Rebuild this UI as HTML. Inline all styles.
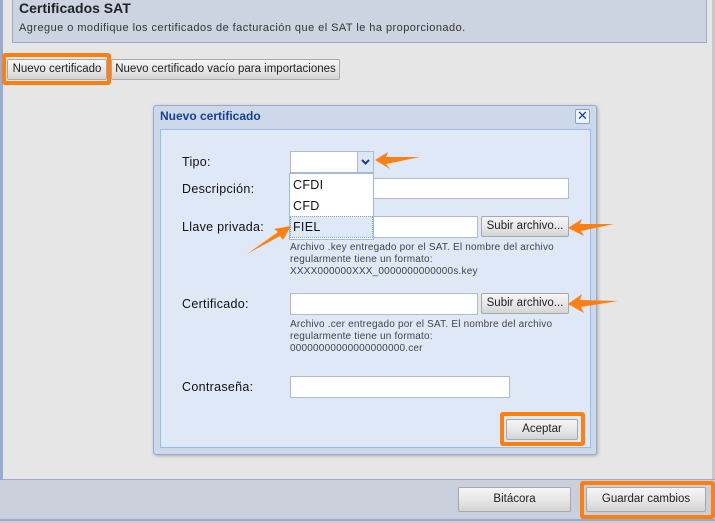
<!DOCTYPE html>
<html><head><meta charset="utf-8"><style>
*{box-sizing:border-box;margin:0;padding:0}
body{width:715px;height:523px;overflow:hidden;background:#e6e6e6;font-family:"Liberation Sans",sans-serif;font-size:12px;color:#222;position:relative;white-space:nowrap}
.a{position:absolute}
.btn{position:absolute;border:1px solid #a8a8a8;border-radius:2px;background:linear-gradient(#f6f6f6,#e4e4e4 60%,#d4d4d4);font-size:11.5px;text-align:center;color:#222;overflow:hidden}
.inp{position:absolute;background:#fff;border:1px solid #b5b8c8}
.lbl{position:absolute;font-size:12.5px;color:#111;letter-spacing:0.3px}
.hint{position:absolute;font-size:10px;color:#444;line-height:12px;letter-spacing:0.2px}
.or{position:absolute;border:4px solid #ff7f10;border-radius:3px}
</style></head><body>
<div class="a" style="left:0;top:0;width:3px;height:523px;background:#99acd0"></div>
<div class="a" style="left:712px;top:0;width:3px;height:480px;background:#c8c8c8"></div>
<div class="a" style="left:12px;top:0;width:695px;height:43px;background:#ccd4e2;border:1px solid #99acd0;border-top:none"></div>
<div class="a" style="left:19px;top:0px;font-weight:bold;font-size:14px;color:#222">Certificados SAT</div>
<div class="a" style="left:19px;top:22px;font-size:11px;color:#333;letter-spacing:0.45px">Agregue o modifique los certificados de facturación que el SAT le ha proporcionado.</div>

<div class="btn" style="left:7px;top:59px;width:100px;height:21px;line-height:19px">Nuevo certificado</div>
<div class="btn" style="left:111px;top:59px;width:229px;height:21px;line-height:19px">Nuevo certificado vacío para importaciones</div>
<div class="or" style="left:2px;top:53px;width:109px;height:32px"></div>

<div class="a" style="left:153px;top:105px;width:444px;height:350px;background:#cdd8ea;border:1px solid #99acd0;border-radius:3px;box-shadow:1px 1px 3px #aaa"></div>
<div class="a" style="left:160px;top:109px;font-weight:bold;color:#15428b;font-size:12px">Nuevo certificado</div>
<div class="a" style="left:575px;top:109px;width:15px;height:15px;border:1px solid #8aa0c8;border-radius:2px;background:#eef3fb;color:#15428b;font-size:13px;line-height:12px;text-align:center">✕</div>
<div class="a" style="left:160px;top:129px;width:431px;height:319px;background:#dfe8f6;border:1px solid #99bbe8"></div>

<div class="lbl" style="left:182px;top:155px">Tipo:</div>
<div class="inp" style="left:290px;top:151px;width:68px;height:22px"></div>
<div class="a" style="left:357px;top:151px;width:17px;height:22px;background:#dde6f4;border:1px solid #b5b8c8"><svg width="15" height="20"><path d="M4 8 L7.5 11.5 L11 8" stroke="#15428b" stroke-width="2" fill="none"/></svg></div>
<div class="lbl" style="left:182px;top:182px">Descripción:</div>
<div class="inp" style="left:372px;top:178px;width:197px;height:21px"></div>
<div class="lbl" style="left:182px;top:220px">Llave privada:</div>
<div class="inp" style="left:372px;top:216px;width:106px;height:22px"></div>
<div class="btn" style="left:481px;top:216px;width:88px;height:21px;line-height:19px">Subir archivo...</div>
<div class="hint" style="left:290px;top:242px">Archivo .key entregado por el SAT. El nombre del archivo<br>regularmente tiene un formato:<br>XXXX000000XXX_0000000000000s.key</div>

<div class="a" style="left:289px;top:173px;width:85px;height:67px;background:#fff;border:1px solid #99bbe8"></div>
<div class="lbl" style="left:293px;top:178px">CFDI</div>
<div class="lbl" style="left:293px;top:199px">CFD</div>
<div class="a" style="left:290px;top:216px;width:83px;height:22px;background:#dfe8f6;border:1px dotted #8aa"></div>
<div class="lbl" style="left:293px;top:220px">FIEL</div>

<div class="lbl" style="left:182px;top:297px">Certificado:</div>
<div class="inp" style="left:290px;top:293px;width:188px;height:22px"></div>
<div class="btn" style="left:481px;top:293px;width:88px;height:21px;line-height:19px">Subir archivo...</div>
<div class="hint" style="left:290px;top:319px">Archivo .cer entregado por el SAT. El nombre del archivo<br>regularmente tiene un formato:<br>00000000000000000000.cer</div>

<div class="lbl" style="left:182px;top:380px">Contraseña:</div>
<div class="inp" style="left:290px;top:376px;width:220px;height:22px"></div>

<div class="btn" style="left:506px;top:419px;width:72px;height:21px;line-height:19px">Aceptar</div>
<div class="or" style="left:500px;top:412px;width:85px;height:34px"></div>

<div class="a" style="left:0;top:479px;width:715px;height:44px;background:#c9d0dc;border-top:1px solid #99acd0"></div>
<div class="a" style="left:0;top:519px;width:715px;height:2px;background:#99acd0"></div>
<div class="btn" style="left:458px;top:487px;width:113px;height:25px;line-height:23px">Bitácora</div>
<div class="btn" style="left:586px;top:487px;width:120px;height:25px;line-height:23px">Guardar cambios</div>
<div class="or" style="left:580px;top:481px;width:135px;height:38px"></div>

<svg class="a" style="left:0;top:0" width="715" height="523">
<g fill="#ff7f10">
<polygon points="375,160 388,152 386,157 420,157 386,164 390,169"/>
<polygon points="568,228 582,219 580,224 614,224 581,231 584,236"/>
<polygon points="568,304 582,294 580,300 618,301 581,307 584,313"/>
<polygon points="291,226 283,240 280,236 247,254 278,232 274,229"/>
</g>
</svg>
</body></html>
